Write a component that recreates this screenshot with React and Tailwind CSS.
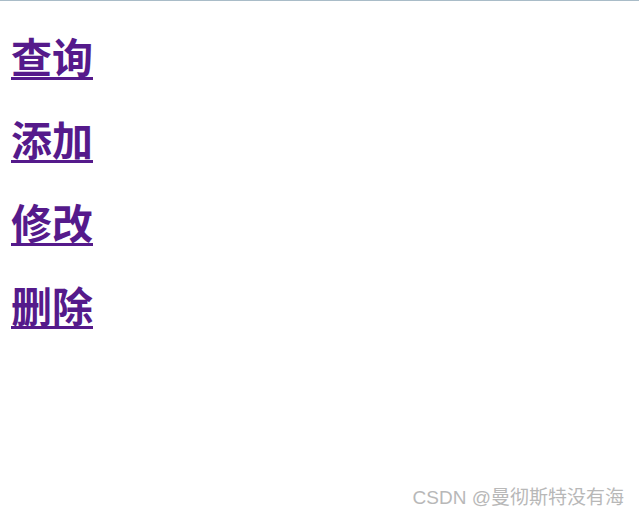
import React from "react";

const links = ["查询", "添加", "修改", "删除"];

const App = () => {
  return (
    <div className="relative h-[520px] w-[639px] bg-white border-t border-[#a9bcc8] overflow-hidden" style={{ fontFamily: '"Noto Sans CJK SC", sans-serif' }}>
      <div className="flex flex-col gap-[27px] pt-[26px] pl-[11px]">
        {links.map((t) => (
          <h1 key={t} className="m-0 text-[41px] leading-[56px] font-bold">
            <a href="#" className="text-[#551a8b] underline decoration-[3px] underline-offset-[4px]">
              {t}
            </a>
          </h1>
        ))}
      </div>

      {/* watermark */}
      <div
        className="absolute right-[15px] bottom-[8px] text-[19px] font-normal text-[#b8b8b8]"
        style={{ fontFamily: '"Liberation Sans", "Noto Sans CJK SC", sans-serif' }}
      >
        CSDN @曼彻斯特没有海
      </div>
    </div>
  );
};

export default App;
